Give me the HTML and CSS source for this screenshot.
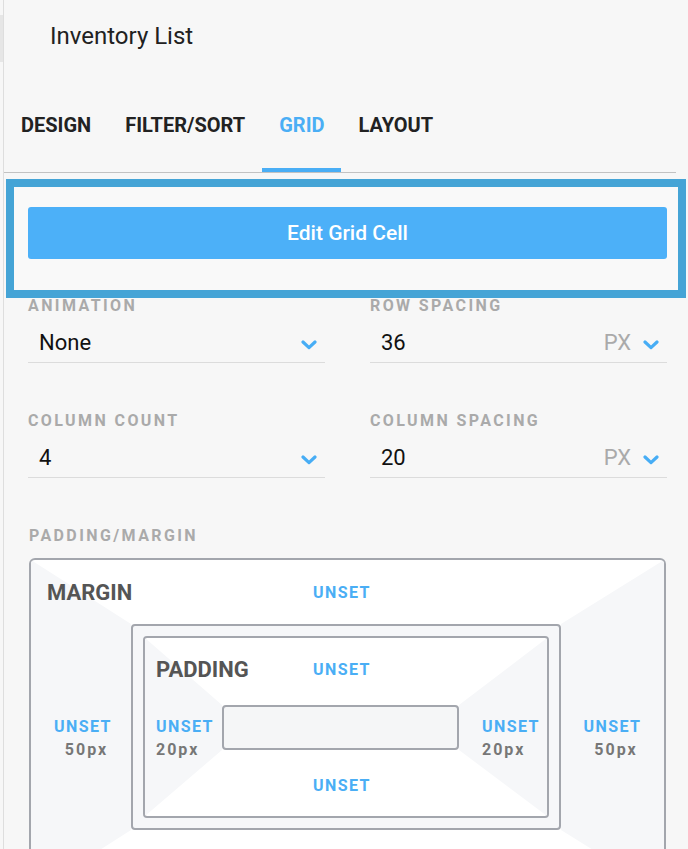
FILE: index.html
```html
<!DOCTYPE html>
<html lang="en">
<head>
<meta charset="utf-8">
<title>Inventory List</title>
<link rel="stylesheet" href="styles.css">
</head>
<body>
<div class="app">
  <div class="rail"><div class="rail-tab"></div></div>
  <div class="panel">
    <div class="title">Inventory List</div>
    <nav class="tabs">
      <div class="tab">DESIGN</div>
      <div class="tab">FILTER/SORT</div>
      <div class="tab active">GRID</div>
      <div class="tab">LAYOUT</div>
    </nav>
    <div class="highlight">
      <button class="edit-btn">Edit Grid Cell</button>
    </div>
    <div class="fields">
      <div class="field">
        <div class="label">ANIMATION</div>
        <div class="control">
          <span class="value">None</span>
          <svg class="chev" viewBox="0 0 16 10" width="16" height="10"><polyline points="2,2 8,7.6 14,2"/></svg>
        </div>
      </div>
      <div class="field">
        <div class="label">ROW SPACING</div>
        <div class="control">
          <span class="value">36</span>
          <span class="unit">PX</span>
          <svg class="chev" viewBox="0 0 16 10" width="16" height="10"><polyline points="2,2 8,7.6 14,2"/></svg>
        </div>
      </div>
      <div class="field">
        <div class="label">COLUMN COUNT</div>
        <div class="control">
          <span class="value">4</span>
          <svg class="chev" viewBox="0 0 16 10" width="16" height="10"><polyline points="2,2 8,7.6 14,2"/></svg>
        </div>
      </div>
      <div class="field">
        <div class="label">COLUMN SPACING</div>
        <div class="control">
          <span class="value">20</span>
          <span class="unit">PX</span>
          <svg class="chev" viewBox="0 0 16 10" width="16" height="10"><polyline points="2,2 8,7.6 14,2"/></svg>
        </div>
      </div>
    </div>
    <div class="label pm-label">PADDING/MARGIN</div>
    <div class="margin-box">
      <div class="trap m-trap-left"></div>
      <div class="trap m-trap-right"></div>
      <div class="m-top"><span class="box-title">MARGIN</span><span class="unset">UNSET</span></div>
      <div class="m-side m-side-left"><span class="unset">UNSET</span><span class="pxv m-px">50px</span></div>
      <div class="m-side m-side-right"><span class="unset">UNSET</span><span class="pxv m-px">50px</span></div>
      <div class="padding-outer">
        <div class="padding-box">
          <div class="trap p-trap-left"></div>
          <div class="trap p-trap-right"></div>
          <div class="p-top"><span class="box-title">PADDING</span><span class="unset">UNSET</span></div>
          <div class="p-side p-side-left"><span class="unset">UNSET</span><span class="pxv">20px</span></div>
          <div class="p-side p-side-right"><span class="unset">UNSET</span><span class="pxv">20px</span></div>
          <div class="content-box"></div>
          <div class="p-bottom"><span class="unset">UNSET</span></div>
        </div>
      </div>
    </div>
  </div>
</div>
</body>
</html>
```
FILE: styles.css
```css
html, body {
  margin: 0;
  padding: 0;
  overflow: hidden;
  background: #f7f7f7;
  font-family: Roboto, "Noto Sans", sans-serif;
}

.app {
  display: flex;
  width: 688px;
  min-height: 849px;
}

.rail {
  width: 3px;
  flex: none;
}

.rail-tab {
  margin-top: 15px;
  height: 47px;
  background: #e6e6e6;
}

.panel {
  flex: 1;
  border-left: 1px solid #dedede;
}

.title {
  padding: 22px 0 0 46px;
  font-size: 24px;
  line-height: 28px;
  color: #212121;
}

.tabs {
  display: flex;
  margin: 63px 12px 0 0;
  border-bottom: 1px solid #c2c2c2;
}

.tab {
  padding: 0 17px 31px;
  font-size: 20px;
  font-weight: 700;
  line-height: 24px;
  color: #222;
  border-bottom: 4px solid transparent;
}

.tab.active {
  color: #4aaef5;
  border-bottom-color: #4aaef5;
}

.highlight {
  margin: 6px 2px 0;
  border: 8px solid #45a4d6;
  padding: 20px 11px 31px 14px;
  background: #f9f9f9;
}

.edit-btn {
  display: block;
  width: 100%;
  height: 52px;
  border: none;
  border-radius: 3px;
  background: #4cb0f8;
  color: #fff;
  font-family: Roboto, sans-serif;
  font-size: 21px;
  font-weight: 500;
  padding: 0;
}

.fields {
  display: grid;
  grid-template-columns: 1fr 1fr;
  column-gap: 45px;
  row-gap: 50px;
  padding: 0 21px 0 24px;
}

.label {
  font-size: 16px;
  line-height: 16px;
  font-weight: 700;
  letter-spacing: 2.4px;
  color: #aaaaaa;
}

.control {
  display: flex;
  align-items: center;
  margin-top: 16px;
  padding: 0 8px 6px 11px;
  border-bottom: 1px solid #dcdcdc;
}

.value {
  flex: 1;
  font-size: 22px;
  line-height: 26px;
  color: #111;
}

.unit {
  font-size: 22px;
  line-height: 26px;
  color: #aaaaaa;
  margin-right: 12px;
}

.chev {
  margin-top: 3px;
  fill: none;
  stroke: #47adf5;
  stroke-width: 3.2;
  stroke-linecap: round;
  stroke-linejoin: round;
}

.pm-label {
  margin: 50px 21px 0 25px;
}

.margin-box {
  display: grid;
  grid-template-columns: 100px 1fr 103px;
  grid-template-rows: 64px auto 64px;
  margin: 14px 22px 0 25px;
  border: 2px solid #a3a6ad;
  border-radius: 6px;
  background: #fff;
  overflow: hidden;
}

.trap {
  background: #f6f7f9;
}

.m-trap-left {
  grid-column: 1;
  grid-row: 1 / 4;
  clip-path: polygon(0 0, 100% 64px, 100% calc(100% - 64px), 0 100%);
}

.m-trap-right {
  grid-column: 3;
  grid-row: 1 / 4;
  clip-path: polygon(100% 0, 0 64px, 0 calc(100% - 64px), 100% 100%);
}

.m-top, .m-side, .p-top, .p-side, .p-bottom {
  position: relative;
  z-index: 1;
}

.m-top {
  grid-column: 1 / 4;
  grid-row: 1;
  display: grid;
  grid-template-columns: 1fr auto 1fr;
  align-items: center;
  padding: 0 27px 0 16px;
}

.box-title {
  font-size: 22px;
  font-weight: 700;
  color: #555;
}

.unset {
  font-size: 16px;
  line-height: 23px;
  font-weight: 700;
  letter-spacing: 1.4px;
  color: #4aaef5;
}

.pxv {
  font-size: 16px;
  line-height: 23px;
  font-weight: 700;
  letter-spacing: 2px;
  color: #777;
}

.m-px {
  padding-left: 7px;
}

.m-side {
  grid-row: 1 / 4;
  display: flex;
  flex-direction: column;
  align-items: center;
  justify-content: center;
  padding-top: 21px;
}

.m-side-left { grid-column: 1; padding-left: 4px; }
.m-side-right { grid-column: 3; }

.padding-outer {
  grid-column: 2;
  grid-row: 2;
  border: 2px solid #a3a6ad;
  border-radius: 4px;
  background: #f6f7f9;
  padding: 10px;
}

.padding-box {
  display: grid;
  grid-template-columns: 77px 1fr 88px;
  grid-template-rows: 67px 45px 66px;
  border: 2px solid #a3a6ad;
  border-radius: 4px;
  background: #fff;
  overflow: hidden;
}

.p-trap-left {
  grid-column: 1;
  grid-row: 1 / 4;
  clip-path: polygon(0 0, 100% 67px, 100% calc(100% - 66px), 0 100%);
}

.p-trap-right {
  grid-column: 3;
  grid-row: 1 / 4;
  clip-path: polygon(100% 0, 0 67px, 0 calc(100% - 66px), 100% 100%);
}

.p-top {
  grid-column: 1 / 4;
  grid-row: 1;
  display: grid;
  grid-template-columns: 1fr auto 1fr;
  align-items: center;
  padding: 0 19px 4px 11px;
}

.p-side {
  grid-row: 1 / 4;
  display: flex;
  flex-direction: column;
  align-items: flex-start;
  justify-content: center;
  padding-top: 21px;
}

.p-side-left { grid-column: 1; padding-left: 11px; }
.p-side-right { grid-column: 3; padding-left: 23px; }

.content-box {
  grid-column: 2;
  grid-row: 2;
  border: 2px solid #a3a6ad;
  border-radius: 4px;
  background: #f5f6f7;
}

.p-bottom {
  grid-column: 1 / 4;
  grid-row: 3;
  display: flex;
  justify-content: center;
  align-items: center;
  padding: 4px 19px 0 11px;
}
```
